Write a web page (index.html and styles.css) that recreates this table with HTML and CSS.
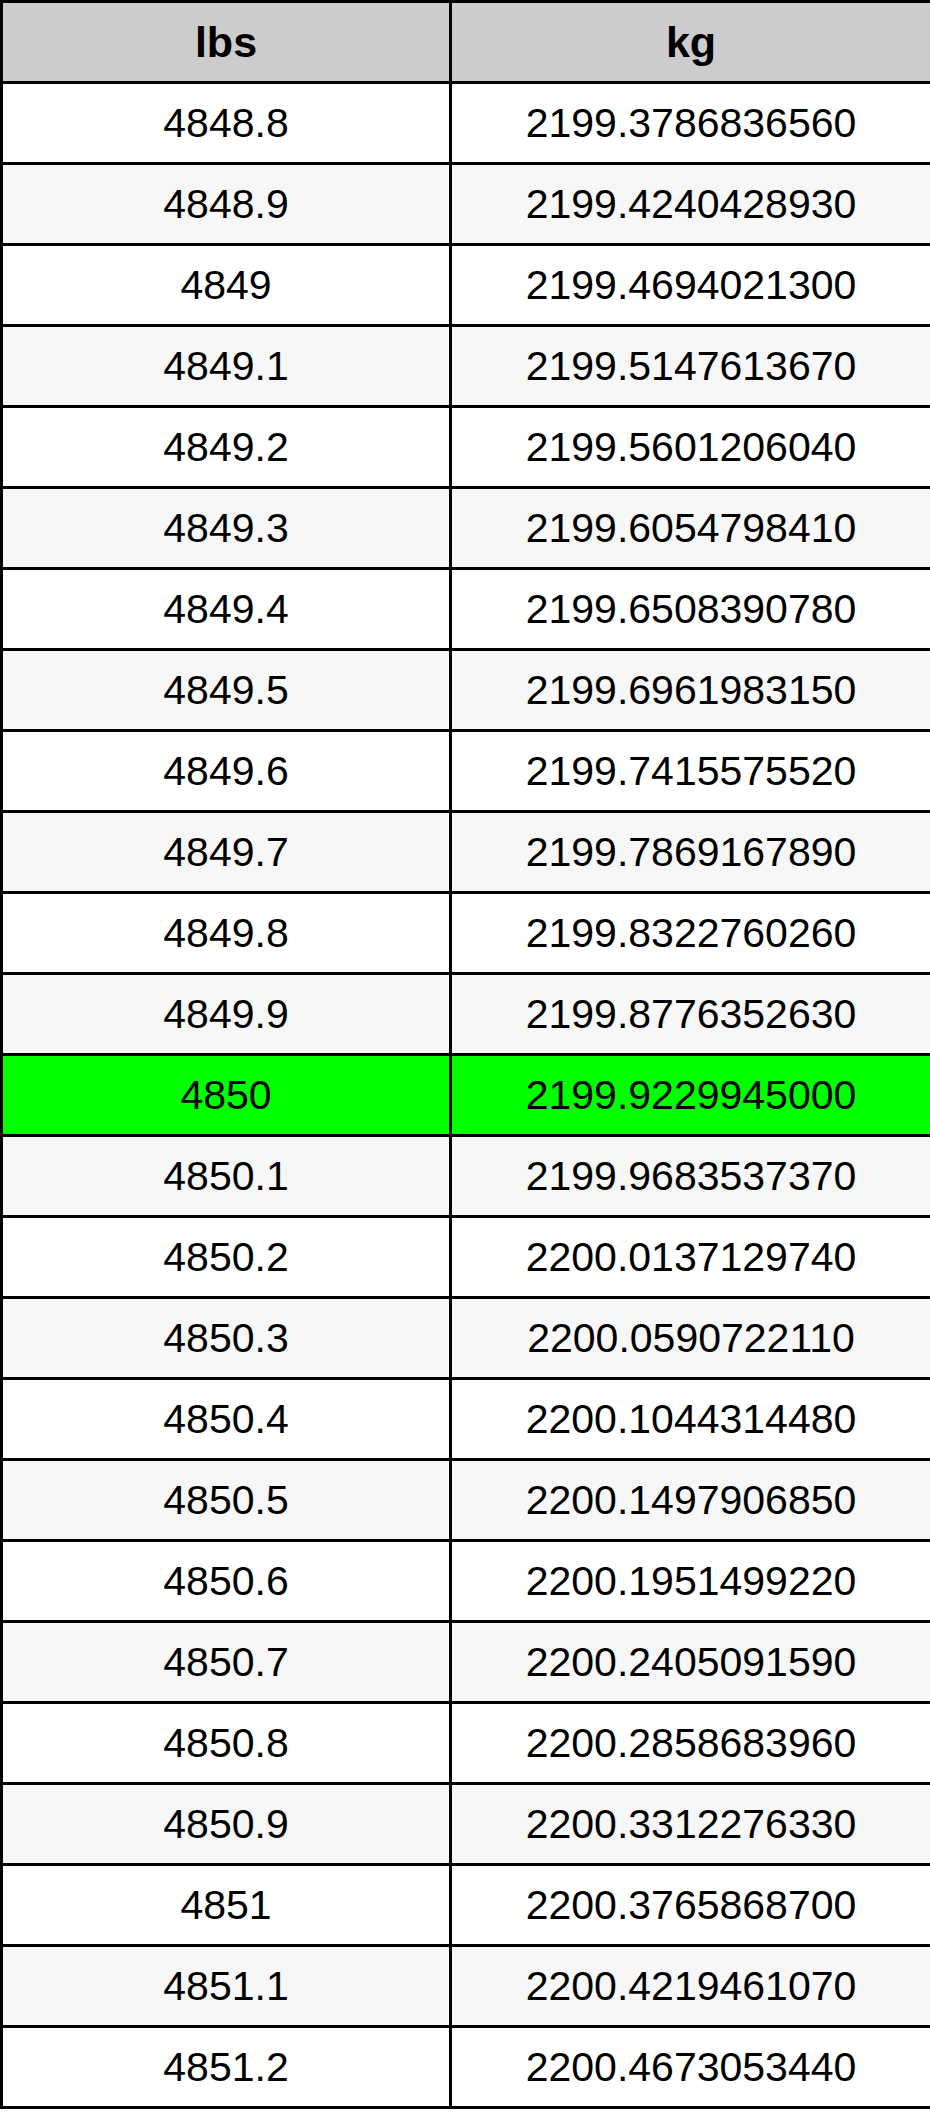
FILE: index.html
```html
<!DOCTYPE html>
<html>
<head>
<meta charset="utf-8">
<link rel="stylesheet" href="styles.css">
</head>
<body>
<table class="conv">
<colgroup><col class="c1"><col class="c2"></colgroup>
<thead>
<tr><th>lbs</th><th>kg</th></tr>
</thead>
<tbody>
<tr><td>4848.8</td><td>2199.3786836560</td></tr>
<tr><td>4848.9</td><td>2199.4240428930</td></tr>
<tr><td>4849</td><td>2199.4694021300</td></tr>
<tr><td>4849.1</td><td>2199.5147613670</td></tr>
<tr><td>4849.2</td><td>2199.5601206040</td></tr>
<tr><td>4849.3</td><td>2199.6054798410</td></tr>
<tr><td>4849.4</td><td>2199.6508390780</td></tr>
<tr><td>4849.5</td><td>2199.6961983150</td></tr>
<tr><td>4849.6</td><td>2199.7415575520</td></tr>
<tr><td>4849.7</td><td>2199.7869167890</td></tr>
<tr><td>4849.8</td><td>2199.8322760260</td></tr>
<tr><td>4849.9</td><td>2199.8776352630</td></tr>
<tr class="hl"><td>4850</td><td>2199.9229945000</td></tr>
<tr><td>4850.1</td><td>2199.9683537370</td></tr>
<tr><td>4850.2</td><td>2200.0137129740</td></tr>
<tr><td>4850.3</td><td>2200.0590722110</td></tr>
<tr><td>4850.4</td><td>2200.1044314480</td></tr>
<tr><td>4850.5</td><td>2200.1497906850</td></tr>
<tr><td>4850.6</td><td>2200.1951499220</td></tr>
<tr><td>4850.7</td><td>2200.2405091590</td></tr>
<tr><td>4850.8</td><td>2200.2858683960</td></tr>
<tr><td>4850.9</td><td>2200.3312276330</td></tr>
<tr><td>4851</td><td>2200.3765868700</td></tr>
<tr><td>4851.1</td><td>2200.4219461070</td></tr>
<tr><td>4851.2</td><td>2200.4673053440</td></tr>
</tbody>
</table>
</body>
</html>
```
FILE: styles.css
```css
html, body {
  margin: 0;
  padding: 0;
  background: #ffffff;
}
.conv {
  width: 930px;
  border-collapse: collapse;
  table-layout: fixed;
  font-family: "Liberation Sans", Arial, sans-serif;
  font-size: 41px;
  color: #000;
}
.c1 { width: 449px; }
.c2 { width: 481px; }
.conv th, .conv td {
  border: 3px solid #000;
  padding: 0;
  height: 78px;
  line-height: 78px;
  text-align: center;
  white-space: nowrap;
}
.conv th {
  background: #cccccc;
  font-weight: bold;
  font-size: 43px;
  line-height: 74px;
}
.conv tbody tr:nth-child(even) td {
  background: #f7f7f7;
}
.conv tbody tr.hl td {
  background: #00ff00;
}
```
